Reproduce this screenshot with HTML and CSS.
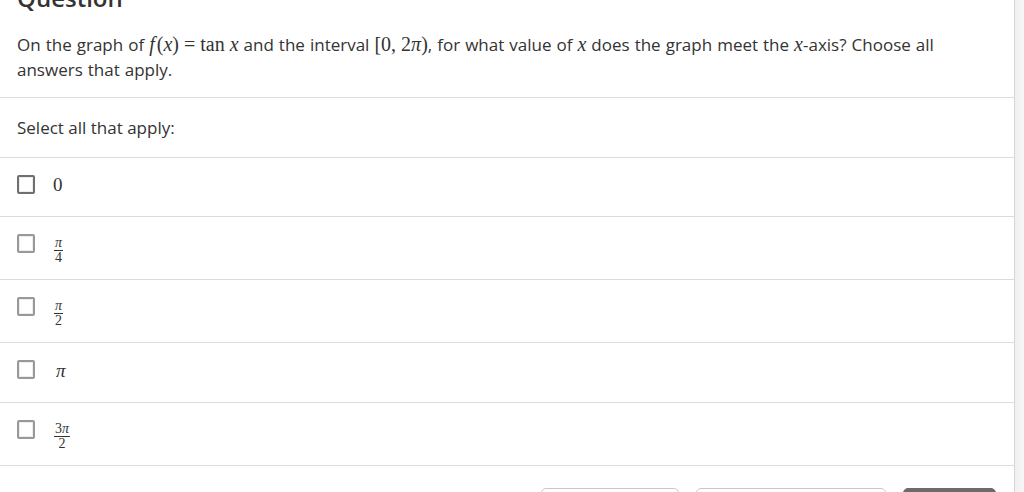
FILE: index.html
```html
<!DOCTYPE html>
<html>
<head>
<meta charset="utf-8">
<link rel="stylesheet" href="styles.css">
</head>
<body>
<div class="page">
  <main class="panel">
    <h2 class="title">Question</h2>
    <p class="prompt">On the graph of <span class="m"><i class="fi">f</i>(<i>x</i>)<span class="op">=</span>tan <i>x</i></span> and the interval <span class="m">[0, 2<i>π</i>)</span>, for what value of <span class="m"><i>x</i></span> does the graph meet the <span class="m"><i>x</i></span>-axis? Choose all answers that apply.</p>
    <div class="instr">Select all that apply:</div>
    <ul class="choices">
      <li class="choice h59"><span class="box dark"></span><span class="val">0</span></li>
      <li class="choice h63"><span class="box"></span><span class="frac"><span class="num"><i>π</i></span><span class="den">4</span></span></li>
      <li class="choice h63"><span class="box"></span><span class="frac"><span class="num"><i>π</i></span><span class="den">2</span></span></li>
      <li class="choice h60"><span class="box"></span><span class="val"><i>π</i></span></li>
      <li class="choice h64"><span class="box"></span><span class="frac"><span class="num">3<i>π</i></span><span class="den">2</span></span></li>
    </ul>
    <div class="actions">
      <button class="btn b1"></button>
      <button class="btn b2"></button>
      <button class="btn b3"></button>
    </div>
  </main>
  <div class="track"></div>
</div>
</body>
</html>
```

FILE: styles.css
```css
html, body {
  margin: 0;
  padding: 0;
  height: 492px;
  overflow: hidden;
  background: #fff;
}
.page {
  display: flex;
  height: 492px;
  font-family: "Open Sans", "Liberation Sans", sans-serif;
  color: #333;
}
.panel {
  width: 1014px;
  border-right: 1px solid #d6d6d6;
  box-sizing: content-box;
}
.track {
  flex: 1;
  background: linear-gradient(to right, #f0f0f0, #f6f6f6);
}
.title {
  margin: -16px 0 0;
  padding: 0 17px;
  font-size: 24px;
  line-height: 28px;
  font-weight: 600;
  color: #333;
}
.prompt {
  margin: 0;
  padding: 20px 80px 15px 17px;
  font-size: 17px;
  line-height: 25px;
  word-spacing: 0.6px;
  border-bottom: 1px solid #dcdcdc;
}
.m {
  font-family: "Liberation Serif", "Times New Roman", serif;
  font-size: 20px;
  word-spacing: 0;
}
.m i { font-style: italic; }
.m .fi { padding-right: 2px; }
.op { margin: 0 5px; }
.instr {
  height: 59px;
  display: flex;
  align-items: center;
  padding: 0 17px;
  font-size: 17px;
  box-sizing: border-box;
}
.choices {
  list-style: none;
  margin: 0;
  padding: 0;
}
.choice {
  display: flex;
  align-items: flex-start;
  gap: 17px;
  padding: 17px 17px 0;
  border-top: 1px solid #dcdcdc;
  box-sizing: border-box;
}
.choice:last-child { border-bottom: 1px solid #dcdcdc; }
.h59 { height: 59px; }
.h60 { height: 60px; }
.h63 { height: 63px; }
.h64 { height: 64px; }
.box {
  width: 14px;
  height: 15px;
  border: 2px solid #999;
  border-radius: 2px;
  box-shadow: inset 0 0 0 1px #ececec;
  background: #fff;
  flex: none;
}
.box.dark { border-color: #6f6f6f; }
.val {
  font-family: "Liberation Serif", "Times New Roman", serif;
  font-size: 19px;
  line-height: 20px;
  margin-left: 1px;
}
.choice.h60 .val { margin-left: 4px; padding-top: 1px; }
.frac {
  display: inline-flex;
  flex-direction: column;
  align-items: center;
  font-family: "Liberation Serif", "Times New Roman", serif;
  font-size: 14px;
  line-height: 12px;
  margin-left: 2px;
  margin-top: 3px;
}
.num {
  padding: 0 1px 1px;
  border-bottom: 1px solid #333;
}
.den { padding-top: 1px; }
.actions {
  display: flex;
  padding: 22px 0 0 541px;
  gap: 17px;
}
.btn {
  height: 36px;
  border-radius: 5px;
  border: 1px solid #c8c8c8;
  background: #fff;
  padding: 0;
}
.b1 { width: 138px; }
.b2 { width: 190px; }
.b3 { width: 93px; background: #6b6b6b; border-color: #6b6b6b; }
```
